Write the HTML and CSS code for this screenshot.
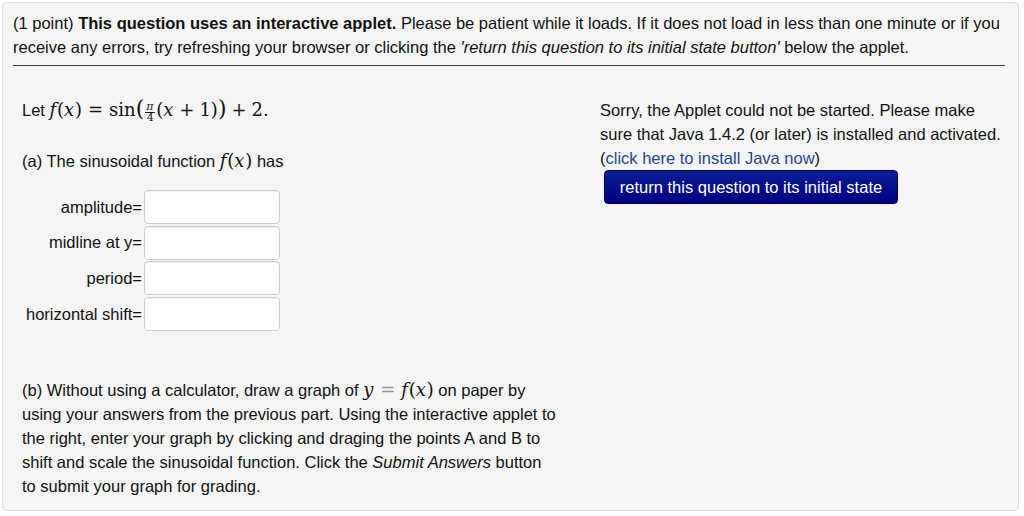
FILE: index.html
```html
<!DOCTYPE html>
<html>
<head>
<meta charset="utf-8">
<link rel="stylesheet" href="styles.css">
</head>
<body>
<div class="well">
  <p class="intro">(1 point) <b>This question uses an interactive applet.</b> Please be patient while it loads. If it does not load in less than one minute or if you receive any errors, try refreshing your browser or clicking the <i>'return this question to its initial state button'</i> below the applet.</p>
  <hr class="rule">
  <div class="cols">
    <div class="left">
      <p class="let">Let <span class="m"><i>f</i>(<i>x</i>)<span class="rel">=</span>sin<span class="bp">(</span><span class="frac"><span class="num"><i>π</i></span><span class="den">4</span></span>(<i>x</i><span class="bin">+</span>1)<span class="bp">)</span><span class="bin">+</span>2.</span></p>
      <p class="parta">(a) The sinusoidal function <span class="m"><i>f</i>(<i>x</i>)</span> has</p>
      <div class="form">
        <label class="lbl">amplitude=</label><span class="inp"></span>
        <label class="lbl">midline at y=</label><span class="inp"></span>
        <label class="lbl">period=</label><span class="inp"></span>
        <label class="lbl">horizontal shift=</label><span class="inp"></span>
      </div>
      <p class="partb">(b) Without using a calculator, draw a graph of <span class="m"><i>y</i><span class="rel gray">=</span><i>f</i>(<i>x</i>)</span> on paper by using your answers from the previous part. Using the interactive applet to the right, enter your graph by clicking and draging the points A and B to shift and scale the sinusoidal function. Click the <i>Submit Answers</i> button to submit your graph for grading.</p>
    </div>
    <div class="right">
      <p class="sorry">Sorry, the Applet could not be started. Please make sure that Java 1.4.2 (or later) is installed and activated. (<a class="link" href="#">click here to install Java now</a>)</p>
      <button class="reset">return this question to its initial state</button>
    </div>
  </div>
</div>
</body>
</html>
```

FILE: styles.css
```css
html, body {
  margin: 0;
  padding: 0;
  background: #ffffff;
}
body {
  font-family: "Liberation Sans", Arial, sans-serif;
  font-size: 16.5px;
  color: #111;
}
.well {
  box-sizing: border-box;
  margin: 2px 0 0 2px;
  width: 1017px;
  height: 509px;
  background: #f5f5f5;
  border: 1px solid #e0e0e0;
  border-radius: 4px;
  padding: 8px 13px 0 10px;
}
.intro {
  margin: 0;
  line-height: 24px;
}
.rule {
  margin: 6px 0 0 0;
  border: 0;
  border-top: 1px solid #444;
  height: 0;
}
.cols {
  display: flex;
  margin-top: 32px;
}
.left {
  width: 560px;
  padding-left: 9px;
  flex: none;
}
.right {
  margin-left: 18px;
  width: 405px;
  flex: none;
}
p { margin: 0; line-height: 24px; }
.m {
  font-family: "DejaVu Serif", "Liberation Serif", serif;
  font-size: 18px;
  line-height: 16px;
  white-space: nowrap;
}
.m i { letter-spacing: 0.8px; }
.rel { margin: 0 6px; }
.bin { margin: 0 5px; }
.gray { color: #999; }
.bp { font-size: 22px; line-height: 16px; }
.frac {
  display: inline-block;
  vertical-align: -5px;
  text-align: center;
  font-size: 11px;
  line-height: 10px;
  margin: 0 1px;
}
.num { display: block; border-bottom: 1px solid #111; padding: 0 1px; }
.den { display: block; }
.parta { margin-top: 26px; }
.form {
  display: grid;
  grid-template-columns: 129px 136px;
  grid-auto-rows: 34px;
  row-gap: 1.7px;
  column-gap: 2px;
  margin-top: 17px;
  margin-left: -9px;
  align-items: center;
}
.lbl { text-align: right; }
.inp {
  box-sizing: border-box;
  height: 34px;
  background: #fff;
  border: 1px solid #cfcfcf;
  border-radius: 4px;
  box-shadow: inset 0 1px 1px rgba(0,0,0,0.06);
}
.partb { margin-top: 47px; width: 535px; }
.link { color: #1f4593; text-decoration: none; }
.reset {
  display: block;
  margin: 0 0 0 4px;
  width: 294px;
  height: 34px;
  font-family: "Liberation Sans", Arial, sans-serif;
  font-size: 16.5px;
  color: #fff;
  background: linear-gradient(#0b1e94, #000082);
  border: 1px solid #00005e;
  border-radius: 4px;
  padding: 0;
}
```
